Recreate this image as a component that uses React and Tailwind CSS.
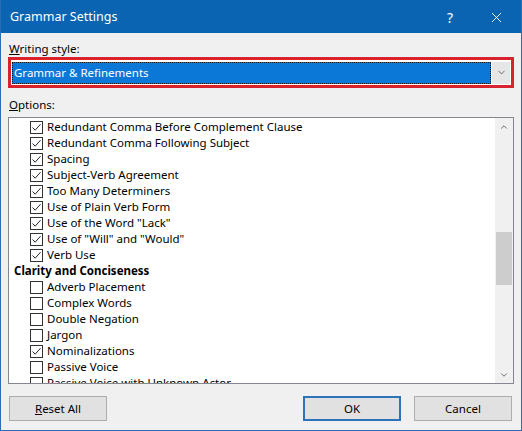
import { X, ChevronDown, ChevronUp } from 'lucide-react'

const ROWS = [
  { label: 'Redundant Comma Before Complement Clause', on: true },
  { label: 'Redundant Comma Following Subject', on: true },
  { label: 'Spacing', on: true },
  { label: 'Subject-Verb Agreement', on: true },
  { label: 'Too Many Determiners', on: true },
  { label: 'Use of Plain Verb Form', on: true },
  { label: 'Use of the Word "Lack"', on: true },
  { label: 'Use of "Will" and "Would"', on: true },
  { label: 'Verb Use', on: true },
  { header: 'Clarity and Conciseness' },
  { label: 'Adverb Placement', on: false },
  { label: 'Complex Words', on: false },
  { label: 'Double Negation', on: false },
  { label: 'Jargon', on: false },
  { label: 'Nominalizations', on: true },
  { label: 'Passive Voice', on: false },
  { label: 'Passive Voice with Unknown Actor', on: false },
]

function Check({ on }) {
  return (
    <span className="w-[13px] h-[13px] border border-[#333333] bg-white flex items-center justify-center flex-shrink-0">
      {on && (
        <svg width="11" height="11" viewBox="0 0 11 11">
          <path d="M1.5 5.5 L4.2 8.2 L9.5 2.2" fill="none" stroke="#222" strokeWidth="1" />
        </svg>
      )}
    </span>
  )
}

function Button({ children, primary }) {
  return (
    <button
      className={`w-[98px] h-[25px] bg-[#e1e1e1] text-[11.5px] text-black flex items-center justify-center ${
        primary ? 'border-2 border-[#2c73b9]' : 'border border-[#adadad]'
      }`}
    >
      {children}
    </button>
  )
}

export default function App() {
  return (
    <div
      className="w-[522px] h-[431px] flex flex-col border border-[#2a6fb3] border-t-0 bg-[#f0f0f0] overflow-hidden"
      style={{ fontFamily: '"Noto Sans", "Open Sans", sans-serif' }}
    >
      {/* Title bar */}
      <div className="h-[33px] bg-[#0b64b2] flex items-center text-white flex-shrink-0 pt-[1px]">
        <span className="pl-[9px] text-[12.5px] flex-1">Grammar Settings</span>
        <span className="w-[46px] text-center text-[14px]">?</span>
        <span className="w-[46px] flex justify-center mr-[2px]">
          <X className="w-[17px] h-[17px]" strokeWidth={1.3} />
        </span>
      </div>

      {/* Body */}
      <div className="flex-1 flex flex-col px-[7px] text-[11.5px] text-black">
        <div className="h-[16px] mt-[8px] leading-[16px] pl-[1px]">
          <span className="underline">W</span>riting style:
        </div>

        {/* Highlighted combo box */}
        <div className="h-[31px] border-[3px] border-[#d7232f] flex items-center px-[1px] bg-white">
          <div className="flex-1 h-[22px] bg-[#0b78d7] border border-dotted border-[#1a1a1a] text-white leading-[20px] px-[1px]">
            Grammar &amp; Refinements
          </div>
          <div className="w-[18px] h-[22px] bg-[#e6e6e6] flex items-center justify-center ml-[1px]">
            <ChevronDown className="w-[11px] h-[11px] text-[#333]" strokeWidth={1.5} />
          </div>
        </div>

        <div className="h-[16px] mt-[9px] leading-[16px] pl-[1px]">
          <span className="underline">O</span>ptions:
        </div>

        {/* Options list */}
        <div className="mt-[4px] h-[267px] border border-[#828790] bg-white flex overflow-hidden">
          <div className="flex-1 overflow-hidden pt-[1px]">
            {ROWS.map((r, i) =>
              r.header ? (
                <div key={i} className="h-[16px] leading-[16px] pl-[5px] font-bold">
                  {r.header}
                </div>
              ) : (
                <div key={i} className="h-[16px] flex items-center pl-[21px] gap-[4px]">
                  <Check on={r.on} />
                  <span className="leading-[16px]">{r.label}</span>
                </div>
              )
            )}
          </div>
          <div className="w-[18px] bg-[#f0f0f0] flex flex-col">
            <div className="h-[17px] flex items-center justify-center">
              <ChevronUp className="w-[10px] h-[10px] text-[#606060]" strokeWidth={2.2} />
            </div>
            <div className="flex-1 flex flex-col">
              <div className="h-[97px]" />
              <div className="h-[53px] mx-[1px] bg-[#cdcdcd]" />
            </div>
            <div className="h-[17px] flex items-center justify-center">
              <ChevronDown className="w-[10px] h-[10px] text-[#606060]" strokeWidth={2.2} />
            </div>
          </div>
        </div>

        {/* Buttons */}
        <div className="mt-[12px] flex items-center pl-[1px] pr-[2px]">
          <Button>
            <span className="underline">R</span>eset All
          </Button>
          <div className="flex-1" />
          <Button primary>OK</Button>
          <div className="w-[13px]" />
          <Button>Cancel</Button>
        </div>
      </div>
    </div>
  )
}
